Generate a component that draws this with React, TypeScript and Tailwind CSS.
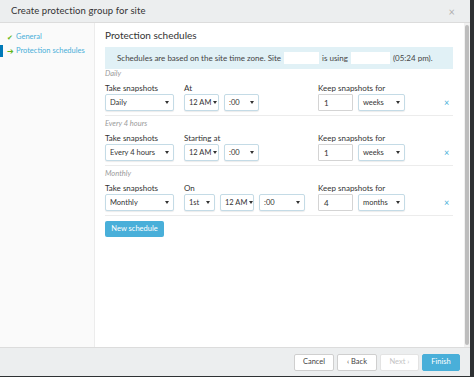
import React from "react";

const font = { fontFamily: "Lato, 'Open Sans', sans-serif" };

const Caret = () => (
  <svg width="4" height="3" viewBox="0 0 4 3" className="shrink-0">
    <path d="M0 0h4L2 3z" fill="#333" />
  </svg>
);

const Select = ({ value, w }: { value: string; w: string }) => (
  <div
    className={`${w} h-[17px] flex items-center justify-between gap-[2px] pl-[4px] pr-[4px] border border-[#c4dbe6] rounded-[2px] bg-white shadow-[0_1px_1px_rgba(0,0,0,0.08)] text-[7.5px] text-[#333] whitespace-nowrap`}
  >
    <span>{value}</span>
    <Caret />
  </div>
);

const NumInput = ({ value }: { value: string }) => (
  <div className="w-[35px] h-[17px] flex items-center pl-[5px] border border-[#d4d4d4] rounded-[1px] bg-white text-[8px] text-[#333]">
    {value}
  </div>
);

const Schedule = ({
  title,
  midLabel,
  first,
  mid,
  keep,
  unit,
  top,
}: {
  title: string;
  midLabel: string;
  first: string;
  mid: React.ReactNode;
  keep: string;
  unit: string;
  top: string;
}) => (
  <div className={`${top} pb-[4px] border-b border-[#ececec]`}>
    <div className="h-[10px] leading-[10px] text-[7.5px] italic text-[#9a9a9a]">{title}</div>
    <div className="mt-[4px] h-[10px] leading-[10px] flex text-[8px] text-[#333]">
      <div className="w-[79px]">Take snapshots</div>
      <div className="w-[134px]">{midLabel}</div>
      <div>Keep snapshots for</div>
    </div>
    <div className="mt-[1px] flex items-center">
      <div className="w-[79px]">
        <Select value={first} w="w-[69px]" />
      </div>
      <div className="w-[134px] flex gap-[5px]">{mid}</div>
      <div className="w-[126px] flex gap-[5px]">
        <NumInput value={keep} />
        <Select value={unit} w="w-[47px]" />
      </div>
      <span className="text-[9px] text-[#49afd9] leading-none">×</span>
    </div>
  </div>
);

const Btn = ({ children, kind }: { children: React.ReactNode; kind: "plain" | "off" | "main" }) => {
  const cls =
    kind === "main"
      ? "bg-[#49afd9] border-[#49afd9] text-white"
      : kind === "off"
      ? "bg-white border-[#e3e3e3] text-[#c4c4c4]"
      : "bg-white border-[#cfcfcf] text-[#444]";
  return (
    <div className={`h-[17px] flex items-center justify-center border rounded-[2px] text-[7.5px] ${cls}`}>
      {children}
    </div>
  );
};

export default function App() {
  return (
    <div className="w-[474px] h-[377px] bg-[#2e3133] overflow-hidden" style={font}>
      <div className="w-[470px] h-[376px] bg-white flex flex-col">
        <div className="h-[23px] shrink-0 flex items-center justify-between pl-[11px] pr-[15px] bg-[#eceeef] border-b border-[#dcdcdc]">
          <span className="text-[9.5px] text-[#333] tracking-[0.1px]">Create protection group for site</span>
          <span className="text-[11px] text-[#b0b0b0] leading-none">×</span>
        </div>
        <div className="flex flex-1 min-h-0">
          <div className="w-[95px] shrink-0 bg-[#fafafa] border-r border-[#ececec] pt-[8px]">
            <div className="h-[12px] flex items-center pl-[7px] text-[7.5px] text-[#49afd9]">
              <span className="text-[#60b515] text-[7px] mr-[3px]">✔</span>General
            </div>
            <div className="h-[12px] mt-[2px] flex items-center pl-[4px] text-[7.5px] text-[#49afd9] border-l-[3px] border-[#0079b8]">
              <span className="text-[#60b515] text-[8px] mr-[2px]">➔</span>Protection schedules
            </div>
          </div>
          <div className="flex-1 pl-[10px] pr-[11px]">
            <div className="h-[24px] flex items-center text-[10px] text-[#333]">Protection schedules</div>
            <div className="h-[22px] flex items-center pl-[12px] bg-[#e1f1f6] text-[8px] text-[#444]">
              Schedules are based on the site time zone. Site
              <span className="inline-block w-[35px] h-[12px] bg-white mx-[3px]"></span>
              is using
              <span className="inline-block w-[39px] h-[12px] bg-white mx-[3px]"></span>
              (05:24 pm).
            </div>
            <Schedule
              title="Daily"
              midLabel="At"
              first="Daily"
              top="pt-0"
              keep="1"
              unit="weeks"
              mid={
                <>
                  <Select value="12 AM" w="w-[35px]" />
                  <Select value=":00" w="w-[35px]" />
                </>
              }
            />
            <Schedule
              title="Every 4 hours"
              midLabel="Starting at"
              first="Every 4 hours"
              top="pt-[3px]"
              keep="1"
              unit="weeks"
              mid={
                <>
                  <Select value="12 AM" w="w-[35px]" />
                  <Select value=":00" w="w-[35px]" />
                </>
              }
            />
            <Schedule
              title="Monthly"
              midLabel="On"
              first="Monthly"
              top="pt-[3px]"
              keep="4"
              unit="months"
              mid={
                <>
                  <Select value="1st" w="w-[31px]" />
                  <Select value="12 AM" w="w-[34px]" />
                  <Select value=":00" w="w-[46px]" />
                </>
              }
            />
            <div className="mt-[5px] w-[59px] h-[16px] flex items-center justify-center rounded-[2px] bg-[#49afd9] text-white text-[7.5px]">
              New schedule
            </div>
          </div>
          <div className="w-[6px] shrink-0 bg-[#f1f1f1] py-[2px] flex">
            <div className="w-[4px] mx-auto bg-[#bdbdbd] rounded-full"></div>
          </div>
        </div>
        <div className="h-[29px] shrink-0 flex items-center justify-end gap-[3px] pr-[10px] bg-[#eceeef] border-t border-[#dcdcdc]">
          <div className="w-[40px]"><Btn kind="plain">Cancel</Btn></div>
          <div className="w-[40px]"><Btn kind="plain">‹ Back</Btn></div>
          <div className="w-[39px]"><Btn kind="off">Next ›</Btn></div>
          <div className="w-[38px]"><Btn kind="main">Finish</Btn></div>
        </div>
      </div>
    </div>
  );
}
